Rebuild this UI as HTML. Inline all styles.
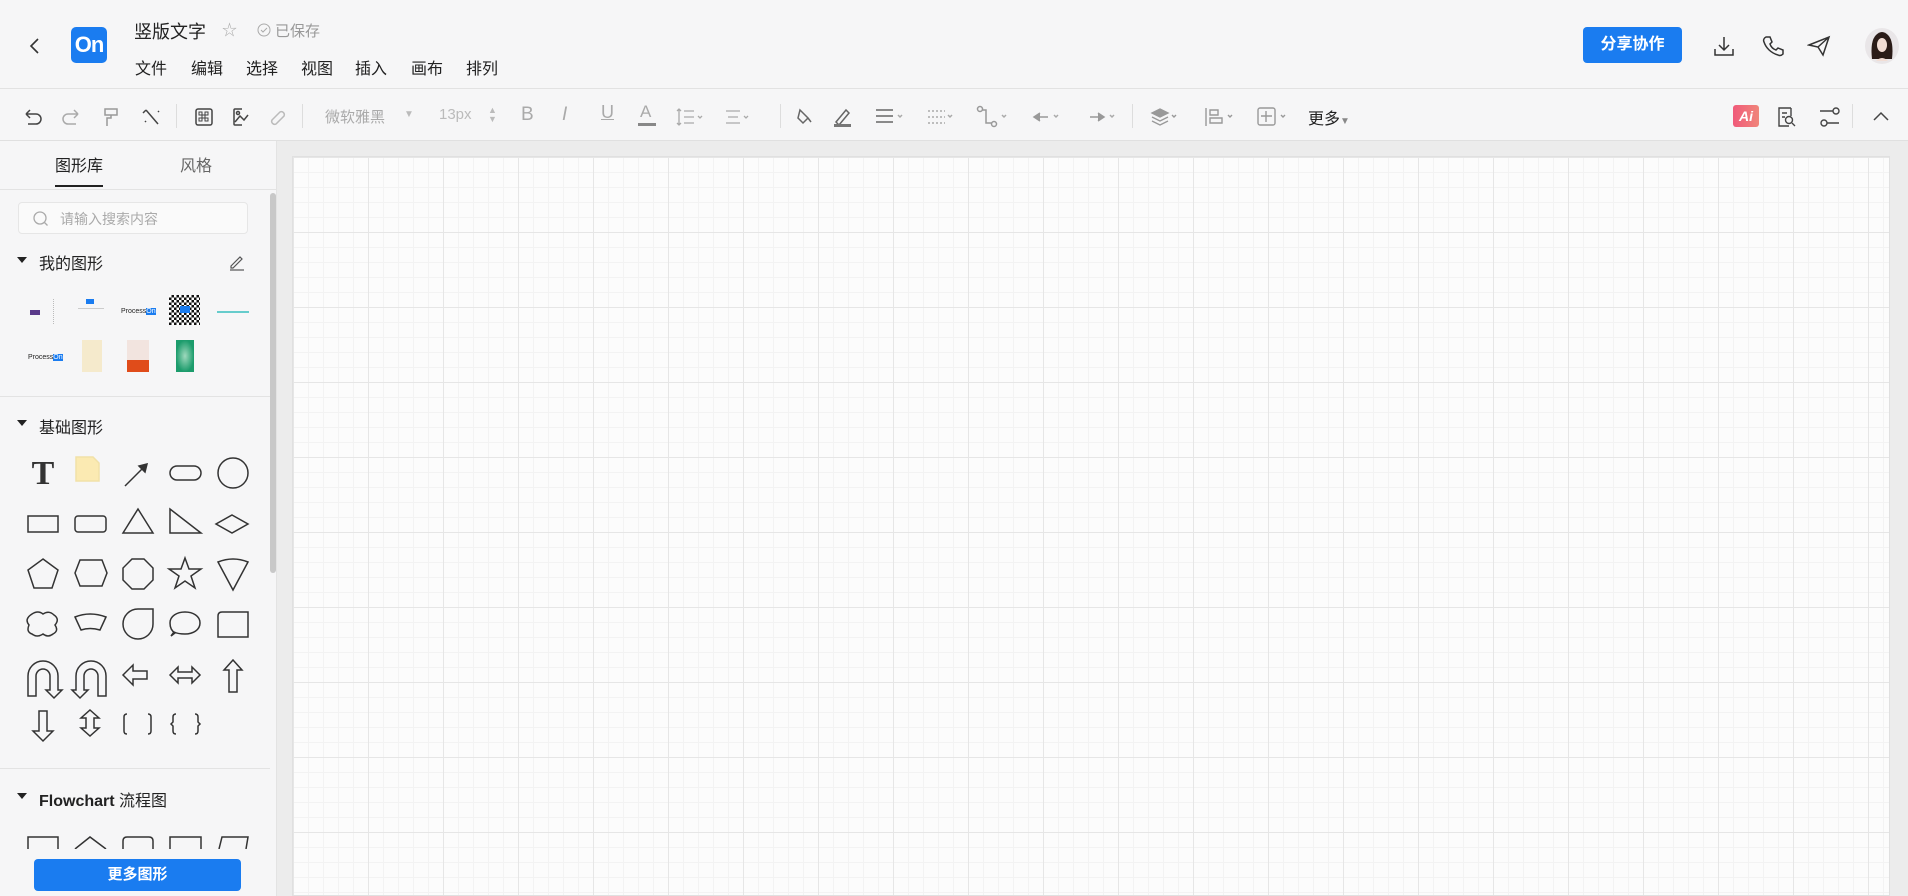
<!DOCTYPE html>
<html><head><meta charset="utf-8">
<style>
*{margin:0;padding:0;box-sizing:border-box}
body{width:1908px;height:896px;overflow:hidden;background:#ececec;font-family:"Liberation Sans","Noto Sans CJK SC",sans-serif;position:relative;color:#222}
.a{position:absolute}
#hdr{left:0;top:0;width:1908px;height:89px;background:#f6f6f7;border-bottom:1px solid #e2e2e2}
#tb{left:0;top:89px;width:1908px;height:52px;background:#f6f6f7;border-bottom:1px solid #e0e0e0}
#side{left:0;top:141px;width:277px;height:755px;background:#f6f6f7;border-right:1px solid #e3e3e3}
#canvas{left:292px;top:156px;width:1598px;height:740px;background-color:#fcfcfc;
background-image:linear-gradient(#e6e6e6 1px,transparent 1px),linear-gradient(90deg,#e6e6e6 1px,transparent 1px),linear-gradient(#f3f3f3 1px,transparent 1px),linear-gradient(90deg,#f3f3f3 1px,transparent 1px);
background-size:75px 75px,75px 75px,15px 15px,15px 15px;border:1px solid #e0e0e0}
.menu{top:55px;font-size:16px;color:#222}
.g{color:#aaa}
.sep{top:104px;width:1px;height:24px;background:#ddd}
.tri{font-size:11px;color:#222}
</style></head><body>
<div id="hdr" class="a"></div>
<div id="tb" class="a"></div>
<div id="canvas" class="a"></div>
<div id="side" class="a"></div>

<svg class="a" style="left:27px;top:36px" width="16" height="20"><path d="M11 3 L4 10 L11 17" fill="none" stroke="#333" stroke-width="1.6"/></svg>
<div class="a" style="left:71px;top:27px;width:36px;height:36px;background:#1a7cf0;border-radius:5px;color:#fff;font-weight:bold;font-size:22px;line-height:36px;text-align:center;letter-spacing:-1px">On</div>
<div class="a" style="left:134px;top:18px;font-size:18px;color:#222">竖版文字</div>
<div class="a" style="left:222px;top:19px;font-size:15px;color:#aaa">☆</div>
<svg class="a" style="left:257px;top:23px" width="14" height="14"><circle cx="7" cy="7" r="6" fill="none" stroke="#aaa"/><path d="M4 7l2 2 4-4" fill="none" stroke="#aaa"/></svg>
<div class="a" style="left:275px;top:20px;font-size:15px;color:#999">已保存</div>
<div class="a menu" style="left:135px">文件</div>
<div class="a menu" style="left:191px">编辑</div>
<div class="a menu" style="left:246px">选择</div>
<div class="a menu" style="left:301px">视图</div>
<div class="a menu" style="left:355px">插入</div>
<div class="a menu" style="left:411px">画布</div>
<div class="a menu" style="left:466px">排列</div>

<div class="a" style="left:1583px;top:27px;width:99px;height:36px;background:#1a7cf0;border-radius:4px;color:#fff;font-size:16px;font-weight:bold;line-height:36px;text-align:center">分享协作</div>
<svg class="a" style="left:1712px;top:34px" width="24" height="24"><path d="M12 3v13M7 11l5 5 5-5M3 15v6h18v-6" fill="none" stroke="#333" stroke-width="1.5"/></svg>
<svg class="a" style="left:1761px;top:34px" width="24" height="24"><path d="M5 3l4 0 2 5-2 2c1 3 3 5 6 6l2-2 5 2 0 4c-1 1-3 2-5 1C10 19 5 14 3 8 2 6 3 4 5 3z" fill="none" stroke="#333" stroke-width="1.5"/></svg>
<svg class="a" style="left:1807px;top:34px" width="24" height="24"><path d="M2 11L22 3 16 21 11 13zM11 13L22 3" fill="none" stroke="#333" stroke-width="1.5"/></svg>
<svg class="a" style="left:1864px;top:27px" width="36" height="38"><ellipse cx="18" cy="19" rx="17" ry="18" fill="#e9e6e8"/><path d="M8 32q-2-18 4-24q6-6 12 0q6 6 4 24z" fill="#2a1c18"/><ellipse cx="18" cy="18" rx="5" ry="7" fill="#f1ddd4"/><path d="M12 34q6-6 12 0" fill="#f1ddd4"/></svg>

<!-- toolbar -->
<svg class="a" style="left:22px;top:106px" width="220" height="22" fill="none" stroke="#444" stroke-width="1.5">
<path d="M4 8h10a5 5 0 010 10H6M4 8l4-4M4 8l4 4"/>
<path d="M56 8H46a5 5 0 000 10h8M56 8l-4-4M56 8l-4 4" stroke="#aaa"/>
<path d="M83 3h12v6H83zM89 9v3h-4v8" stroke="#999"/>
<path d="M124 4l12 14M121 7l3-3M136 5l1 1M123 15l1 1" stroke="#444"/>
<rect x="174" y="3" width="16" height="16" rx="2"/><path d="M177 6h3v3h-3zM183 6h3v3h-3zM180 9h3v3h-3zM177 12h3v3h-3zM183 12h3v3h-3z" stroke-width="1"/>
<rect x="212" y="3" width="16" height="16" rx="1"/>
</svg>
<svg class="a" style="left:232px;top:106px" width="60" height="22" fill="none" stroke="#444" stroke-width="1.5"><path d="M3 16l5-6 4 4 4-5"/><circle cx="6" cy="7" r="1.5"/><path d="M40 14l8-8a3 3 0 014 4l-8 8a3 3 0 01-4-4z" stroke="#bbb"/></svg>
<div class="a sep" style="left:176px"></div>
<div class="a sep" style="left:302px"></div>
<div class="a g" style="left:325px;top:106px;font-size:15px">微软雅黑</div>
<div class="a" style="left:404px;top:109px;font-size:10px;color:#bbb">▼</div>
<div class="a" style="left:439px;top:106px;font-size:15px;color:#bbb">13px</div>
<div class="a" style="left:488px;top:106px;font-size:9px;color:#bbb;line-height:9px">▲<br>▼</div>
<div class="a" style="left:521px;top:104px;font-size:19px;color:#aaa">B</div>
<div class="a" style="left:562px;top:104px;font-size:19px;color:#aaa;font-style:italic">I</div>
<div class="a" style="left:601px;top:102px;font-size:18px;color:#aaa;text-decoration:underline">U</div>
<div class="a" style="left:640px;top:102px;font-size:17px;color:#aaa">A</div>
<div class="a" style="left:638px;top:123px;width:18px;height:3px;background:#888"></div>
<svg class="a" style="left:676px;top:106px" width="80" height="22" fill="none" stroke="#aaa" stroke-width="1.3"><path d="M3 3v16M1 5l2-2 2 2M1 17l2 2 2-2M8 5h10M8 11h10M8 17h10M22 10l2 2 2-2"/><path d="M50 5h14M52 11h10M50 17h14M68 10l2 2 2-2"/></svg>
<div class="a sep" style="left:780px"></div>
<svg class="a" style="left:794px;top:104px" width="400" height="26" fill="none" stroke="#666" stroke-width="1.5">
<path d="M6 6l8 8-5 5-5-5z M14 14l3 4"/><path d="M42 18l10-12 3 3-10 12z" /><rect x="40" y="20" width="17" height="3" fill="#777" stroke="none"/>
<path d="M82 6h17M82 12h17M82 18h17"/><path d="M104 11l2 2 2-2" stroke="#aaa"/>
<path d="M134 7h17M134 13h17M134 19h17" stroke="#aaa" stroke-dasharray="2 2"/><path d="M154 11l2 2 2-2" stroke="#aaa"/>
<circle cx="186" cy="5" r="2.5" stroke="#999"/><circle cx="200" cy="20" r="2.5" stroke="#999"/><path d="M188 6h4v13h6" stroke="#999"/><path d="M208 11l2 2 2-2" stroke="#aaa"/>
<path d="M240 13h14M246 9l-6 4 6 4" stroke="#999" fill="#999"/><path d="M260 11l2 2 2-2" stroke="#aaa"/>
<path d="M296 13h14M304 9l6 4-6 4" stroke="#999" fill="#999"/><path d="M316 11l2 2 2-2" stroke="#aaa"/>
</svg>
<div class="a sep" style="left:1132px"></div>
<svg class="a" style="left:1148px;top:104px" width="170" height="26" fill="none" stroke="#999" stroke-width="1.4">
<path d="M4 9l8-4 8 4-8 4z" fill="#999"/><path d="M4 13l8 4 8-4M4 17l8 4 8-4"/><path d="M24 11l2 2 2-2"/>
<path d="M58 4v18M62 6h8v5h-8zM62 14h12v5H62z"/><path d="M80 11l2 2 2-2"/>
<rect x="110" y="4" width="17" height="17" rx="2"/><path d="M118 7v11M113 12h11"/><path d="M133 11l2 2 2-2"/>
</svg>
<div class="a" style="left:1308px;top:105px;font-size:16px;color:#222">更多<span style="font-size:10px;color:#888">▼</span></div>
<div class="a" style="left:1733px;top:105px;width:26px;height:22px;border-radius:3px;background:linear-gradient(90deg,#f05a7a,#f0857a);color:#fff;font-weight:bold;font-style:italic;font-size:14px;line-height:22px;text-align:center">Ai</div>
<svg class="a" style="left:1776px;top:104px" width="100" height="26" fill="none" stroke="#444" stroke-width="1.4"><path d="M15 4H3v18h10M15 4v8"/><circle cx="13" cy="16" r="3.5"/><path d="M16 19l3 3M6 9h5M6 13h3"/><circle cx="60" cy="7" r="3"/><circle cx="48" cy="19" r="3"/><path d="M44 7h13M51 19h12"/></svg>
<div class="a sep" style="left:1852px"></div>
<svg class="a" style="left:1871px;top:107px" width="20" height="18"><path d="M3 13l7-7 7 7" fill="none" stroke="#444" stroke-width="1.5"/></svg>

<!-- sidebar -->
<div class="a" style="left:55px;top:152px;font-size:16px;color:#222">图形库</div>
<div class="a" style="left:55px;top:185px;width:48px;height:2px;background:#222"></div>
<div class="a" style="left:180px;top:152px;font-size:16px;color:#666">风格</div>
<div class="a" style="left:0;top:189px;width:276px;height:1px;background:#e3e3e3"></div>
<div class="a" style="left:270px;top:193px;width:6px;height:380px;background:#c8c8c8;border-radius:3px"></div>
<div class="a" style="left:18px;top:202px;width:230px;height:32px;background:#fafafa;border:1px solid #e6e6e6;border-radius:4px"></div>
<svg class="a" style="left:32px;top:210px" width="18" height="18"><circle cx="8" cy="8" r="6" fill="none" stroke="#aaa" stroke-width="1.3"/><path d="M12.5 12.5l3 3" stroke="#aaa" stroke-width="1.3"/></svg>
<div class="a" style="left:60px;top:209px;font-size:14px;color:#aaa">请输入搜索内容</div>
<svg class="a" style="left:17px;top:257px" width="10" height="8"><path d="M0 0h10L5 6z" fill="#222"/></svg>
<div class="a" style="left:39px;top:250px;font-size:16px;color:#222">我的图形</div>
<svg class="a" style="left:227px;top:252px" width="20" height="20" fill="none" stroke="#555" stroke-width="1.2"><path d="M4 14l9-9 2 2-9 9H4z"/><path d="M3 18h14"/></svg>
<div class="a" style="left:30px;top:310px;width:10px;height:5px;background:#5a3a8a"></div>
<div class="a" style="left:40px;top:299px;width:14px;height:25px;border-right:1px dotted #bbb"></div>
<div class="a" style="left:86px;top:299px;width:8px;height:5px;background:#1a7cf0"></div>
<div class="a" style="left:78px;top:308px;width:26px;height:1px;background:#ccc"></div>
<div class="a" style="left:121px;top:308px;font-size:7px;color:#222">Process<span style="background:#1a7cf0;color:#fff">On</span></div>
<div class="a" style="left:169px;top:295px;width:31px;height:30px;background:repeating-conic-gradient(#111 0 25%,#fff 0 50%) 0 0/5px 5px"></div>
<div class="a" style="left:180px;top:306px;width:10px;height:7px;background:#1a7cf0"></div>
<div class="a" style="left:217px;top:311px;width:32px;height:2px;background:#6cc"></div>
<div class="a" style="left:28px;top:354px;font-size:7px;color:#222">Process<span style="background:#1a7cf0;color:#fff">On</span></div>
<div class="a" style="left:82px;top:340px;width:20px;height:32px;background:#f5eacc"></div>
<div class="a" style="left:127px;top:340px;width:22px;height:20px;background:#f2e4df"></div>
<div class="a" style="left:127px;top:360px;width:22px;height:12px;background:#e04c1a"></div>
<div class="a" style="left:176px;top:340px;width:18px;height:32px;background:radial-gradient(#9fd9bd,#1c9c6c 70%)"></div>

<div class="a" style="left:0;top:396px;width:270px;height:1px;background:#e3e3e3"></div>
<svg class="a" style="left:17px;top:420px" width="10" height="8"><path d="M0 0h10L5 6z" fill="#222"/></svg>
<div class="a" style="left:39px;top:414px;font-size:16px;color:#222">基础图形</div>

<svg class="a" style="left:0;top:440px" width="270" height="420" fill="none" stroke="#333" stroke-width="1.5">
<text x="43" y="44" font-family="Liberation Serif" font-size="34" font-weight="bold" fill="#333" stroke="none" text-anchor="middle">T</text>
<path d="M76 17h17l6 6v18H76z" fill="#fbeab2" stroke="#f1e1a8"/>
<path d="M125 46l22-22M147 24l-8 2 6 6z" fill="#333"/>
<rect x="170" y="26" width="31" height="14" rx="7"/>
<circle cx="233" cy="33" r="15"/>
<rect x="28" y="76" width="30" height="16"/>
<rect x="75" y="76" width="31" height="16" rx="3"/>
<path d="M138 69l15 24h-30z"/>
<path d="M170 69v24h31z"/>
<path d="M232 75l16 9-16 9-16-9z"/>
<path d="M43 119l15 11-6 18H34l-6-18z"/>
<path d="M80 120h22l5 13-5 13H80l-5-13z"/>
<path d="M132 119h12l9 9v12l-9 9h-12l-9-9v-12z"/>
<path d="M185 118l4 11h12l-10 7 4 12-10-7-10 7 4-12-10-7h12z"/>
<path d="M218 122q15-6 30 0l-15 28z"/>
<path d="M32 174q6-4 11 0q6-4 11 1q6 4 1 10q4 6-2 9q-5 4-10 0q-6 4-11 0q-6-2-3-9q-5-6 3-11z"/>
<path d="M75 177q15-6 31 0l-6 13q-10-3-19 0z"/>
<path d="M153 169v15a15 15 0 11-15-15z"/>
<path d="M171 196l4-3q-5-3-5-10c0-7 7-11 15-11s15 4 15 11-7 11-15 11q-7 0-11-2z"/>
<path d="M222 172h26v25h-30v-21q0-4 4-4z"/>
<path d="M28 256v-20a15 15 0 0130 0v14h4l-8 8-8-8h4v-14a7 7 0 00-14 0v20z"/>
<path d="M106 256v-20a15 15 0 00-30 0v14h-4l8 8 8-8h-4v-14a7 7 0 0114 0v20z"/>
<path d="M123 235l10-10v6h14v8h-14v6z"/>
<path d="M170 235l8-8v5h14v-5l8 8-8 8v-5h-14v5z"/>
<path d="M233 220l9 10h-5v22h-8v-22h-5z"/>
<path d="M39 271v20h6l-10 10-10-10h6v-20z" transform="translate(8,0)"/>
<path d="M90 270l9 8h-5v10h5l-9 8-9-8h5v-10h-5z"/>
<path d="M127 274q-3 0-3 3v14q0 3 3 3M148 274q3 0 3 3v14q0 3-3 3"/>
<path d="M176 274q-3 0-3 3v5l-2 2 2 2v5q0 3 3 3M195 274q3 0 3 3v5l2 2-2 2v5q0 3-3 3"/>
</svg>

<div class="a" style="left:0;top:768px;width:270px;height:1px;background:#e3e3e3"></div>
<svg class="a" style="left:17px;top:793px" width="10" height="8"><path d="M0 0h10L5 6z" fill="#222"/></svg>
<div class="a" style="left:39px;top:787px;font-size:16px;font-weight:bold;color:#222">Flowchart <span style="font-weight:normal">流程图</span></div>
<svg class="a" style="left:0;top:835px" width="270" height="14" fill="none" stroke="#333" stroke-width="1.5">
<path d="M28 14V2h30v12"/><path d="M75 14l15-12 16 12"/><path d="M123 14V6q0-4 4-4h22q4 0 4 4v8"/><path d="M170 14V2h31v12"/><path d="M219 14l3-12h26l-2 12"/>
</svg>
<div class="a" style="left:34px;top:859px;width:207px;height:32px;background:#1a7cf0;border-radius:4px;color:#fff;font-size:15px;font-weight:bold;line-height:32px;text-align:center">更多图形</div>
</body></html>
